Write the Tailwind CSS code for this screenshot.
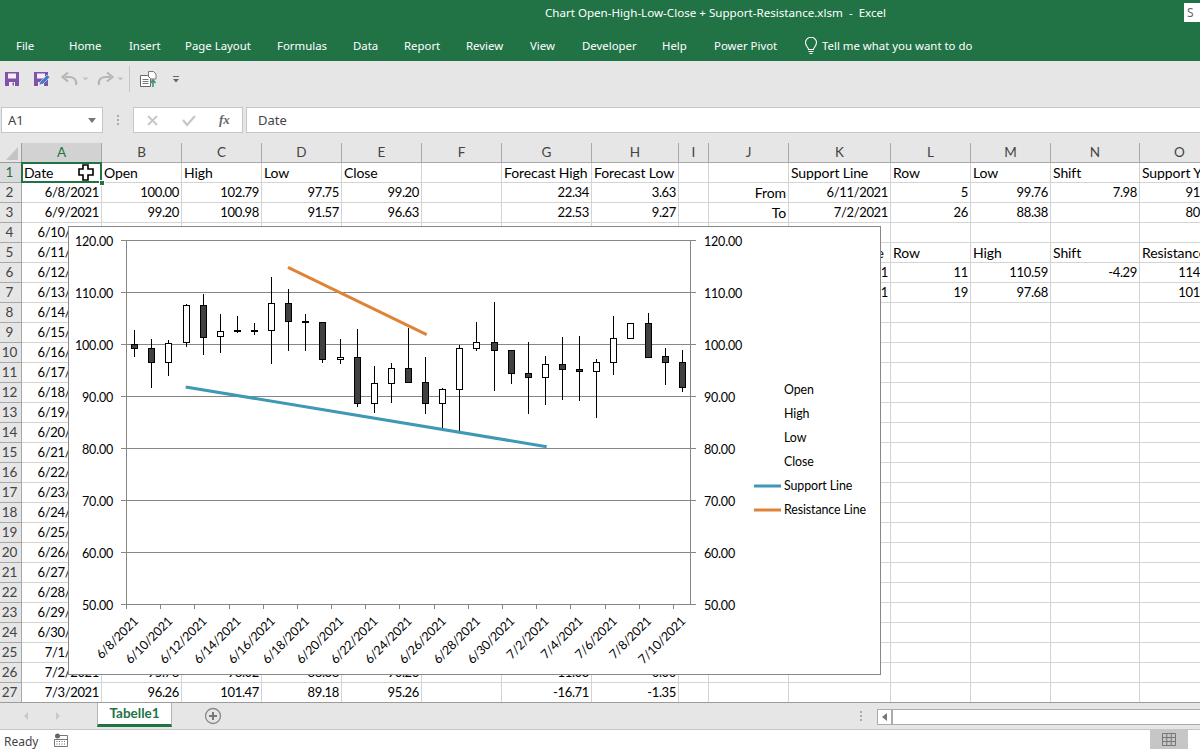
<!DOCTYPE html>
<html lang="en">
<head>
<meta charset="UTF-8">
<title>Chart Open-High-Low-Close + Support-Resistance.xlsm - Excel</title>
<script src="https://cdn.jsdelivr.net/npm/@tailwindcss/browser@4"></script>
</head>
<body class="w-[1200px] h-[750px] overflow-hidden bg-white flex flex-col font-['Noto_Sans',sans-serif]">

<!-- title bar + ribbon tabs -->
<header class="h-[61px] shrink-0 bg-[#217346] text-white relative">
  <div class="h-[27px] flex items-center justify-center text-[11.6px] whitespace-pre pl-[231px] pb-[1px]">Chart Open-High-Low-Close + Support-Resistance.xlsm  -  Excel</div>
  <div class="absolute right-0 top-[3px] w-[16px] h-[19px] bg-white text-[#666] text-[12px] pl-[3px] leading-[19px]">S</div>
  <nav class="flex items-center h-[34px] text-[11.4px] pl-[16px] pt-[4px]">
    <span class="w-[53px]">File</span>
    <span class="w-[60px]">Home</span>
    <span class="w-[56px]">Insert</span>
    <span class="w-[92px]">Page Layout</span>
    <span class="w-[76px]">Formulas</span>
    <span class="w-[51px]">Data</span>
    <span class="w-[62px]">Report</span>
    <span class="w-[64px]">Review</span>
    <span class="w-[52px]">View</span>
    <span class="w-[80px]">Developer</span>
    <span class="w-[52px]">Help</span>
    <span class="w-[90px]">Power Pivot</span>
    <svg width="14" height="18" viewBox="0 0 14 18" fill="none" stroke="white" stroke-width="1.1" class="mr-[4px]">
      <path d="M4.5 12.5c0-2-3-3.5-3-7a5.5 5.2 0 0 1 11 0c0 3.5-3 5-3 7z"/>
      <path d="M4.5 14.5h5M5.5 16.5h3"/>
    </svg>
    <span>Tell me what you want to do</span>
  </nav>
</header>

<!-- quick access toolbar -->
<div class="h-[46px] shrink-0 bg-[#e6e6e6]">
  <svg width="190" height="32" viewBox="0 61 190 32" class="block">
    <path d="M5 72h14v14H5z" fill="#8153a8"/>
    <path d="M8 73.5h8v5H8zM9 82h6v4H9z" fill="#f3eef7"/>
    <path d="M12.5 82.5h1.5v3h-1.5z" fill="#8153a8"/>
    <path d="M34 72h14v14H34z" fill="#8153a8"/>
    <path d="M37 73.5h8v5h-8zM38 82h6v4h-6z" fill="#f3eef7"/>
    <path d="M39 85l1-3 7-7 3 2-7 7z" fill="#3c7fc4" stroke="#e6e6e6" stroke-width=".6"/>
    <path d="M76 85c1-5-2-8-6-8h-5" fill="none" stroke="#b6b6b6" stroke-width="2.2"/>
    <path d="M68 72.5l-5.5 4.5 5.5 4.5" fill="none" stroke="#b6b6b6" stroke-width="2.2"/>
    <path d="M82.5 77.5h6l-3 3z" fill="#c2c2c2"/>
    <path d="M99 85c-1-5 2-8 6-8h5" fill="none" stroke="#b6b6b6" stroke-width="2.2"/>
    <path d="M107 72.5l5.5 4.5-5.5 4.5" fill="none" stroke="#b6b6b6" stroke-width="2.2"/>
    <path d="M117.5 77.5h6l-3 3z" fill="#c2c2c2"/>
    <path d="M129.5 66v26" stroke="#c6c6c6"/>
    <path d="M148.5 71.5h5l2.5 2.5v5h-7.5z" fill="#fff" stroke="#777"/>
    <path d="M140.5 75.5h7l3 3v8h-10z" fill="#fff" stroke="#666"/>
    <path d="M142.5 79.5h6M142.5 81.5h6M142.5 83.5h6" stroke="#777"/>
    <path d="M153 87v-6M150.5 83l2.5-3 2.5 3" fill="none" stroke="#3f9277" stroke-width="1.6"/>
    <path d="M173 76.5h6" stroke="#666"/>
    <path d="M173 79h6l-3 3.5z" fill="#666"/>
  </svg>
</div>

<!-- formula bar -->
<div class="h-[26px] shrink-0 bg-[#e6e6e6] relative">
  <div class="flex h-[26px]">
    <div class="ml-[1px] w-[102px] bg-white border border-[#c6c6c6] flex items-center justify-between pl-[6px] pr-[6px] pt-[1px] text-[13px] text-[#444]">
      <span>A1</span>
      <span class="w-0 h-0 border-x-[4px] border-x-transparent border-t-[5px] border-t-[#777]"></span>
    </div>
    <div class="w-[30px] flex flex-col items-center justify-center gap-[2px]">
      <i class="w-[2px] h-[2px] bg-[#aaa]"></i><i class="w-[2px] h-[2px] bg-[#aaa]"></i><i class="w-[2px] h-[2px] bg-[#aaa]"></i>
    </div>
    <div class="w-[110px] bg-white border border-[#c6c6c6] relative flex items-center">
      <svg width="70" height="24" viewBox="0 0 70 24" class="shrink-0">
        <path d="M14 8l9 9M23 8l-9 9" stroke="#c8c8c8" stroke-width="2" fill="none"/>
        <path d="M49 12l4 5 8-9" stroke="#c8c8c8" stroke-width="2.2" fill="none"/>
      </svg>
      <span class="ml-[15px] font-['Liberation_Serif',serif] italic font-bold text-[13px] text-[#666]">fx</span>
    </div>
    <div class="ml-[3px] flex-1 bg-white border-y border-l border-[#c6c6c6] flex items-center pl-[11px] pt-[1px] text-[13px] text-[#444]">Date</div>
  </div>
</div>
<div class="h-[10px] shrink-0 bg-[#e6e6e6]"></div>

<!-- sheet -->
<main class="h-[560px] shrink-0 relative overflow-hidden">
  <div id="grid" class="grid w-[1220px] grid-cols-[22px_80px_80px_80px_80px_80px_80px_90px_87px_30px_80px_102px_80px_80px_89px_80px] auto-rows-[20px] font-['Lato',sans-serif] text-[14px] text-black"></div>

  <!-- active cell A1 and pointer -->
  <div class="absolute left-[21px] top-[19px] w-[81px] h-[21px] border-2 border-[#217346]"></div>
  <div class="absolute left-[99px] top-[37px] w-[6px] h-[6px] bg-[#217346] border border-white"></div>
  <svg class="absolute left-[78px] top-[21px]" width="16" height="17" viewBox="0 0 16 17">
    <path d="M5 1h5v4h5v6h-5v5H5v-5H1V5h4z" fill="white" stroke="black" stroke-width="1.6"/>
  </svg>

  <!-- chart object floats over the cells -->
  <div class="absolute left-[68px] top-[83px] w-[813px] h-[449px] bg-white border border-[#888]">
    <svg id="chart" class="absolute -left-px -top-px font-['Lato',sans-serif]" width="813" height="449" viewBox="68 226 813 449"></svg>
  </div>
</main>

<!-- sheet tabs + horizontal scrollbar -->
<div class="h-[27px] shrink-0 bg-[#e6e6e6] border-t border-[#9c9c9c] -mt-px relative flex items-start">
  <svg width="90" height="26" viewBox="0 0 90 26" class="shrink-0 ml-[7px]">
    <path d="M21 9l-4 4 4 4zM49 9l4 4-4 4z" fill="#c8c8c8"/>
  </svg>
  <div class="w-[75px] h-[24px] bg-white border-x border-[#b4b4b4] border-b-[3px] border-b-[#217346] flex items-center justify-center font-['Lato',sans-serif] font-bold text-[13.5px] text-[#217346]">Tabelle1</div>
  <svg width="20" height="20" viewBox="0 0 20 20" class="ml-[31px] mt-[3px]">
    <circle cx="10" cy="10" r="7.5" fill="none" stroke="#8a8a8a" stroke-width="1.3"/>
    <path d="M6 10h8M10 6v8" stroke="#777" stroke-width="2"/>
  </svg>
  <div class="absolute left-[860px] top-[8px] flex flex-col gap-[2px]">
    <i class="w-[2px] h-[2px] bg-[#aaa]"></i><i class="w-[2px] h-[2px] bg-[#aaa]"></i><i class="w-[2px] h-[2px] bg-[#aaa]"></i>
  </div>
  <div class="absolute left-[877px] top-[6px] right-0 h-[16px] bg-white border-y border-l border-[#ababab] flex">
    <div class="w-[15px] border-r-2 border-[#ababab] flex items-center justify-center">
      <span class="w-0 h-0 border-y-[4px] border-y-transparent border-r-[5px] border-r-[#777]"></span>
    </div>
  </div>
</div>

<!-- status bar -->
<footer class="flex-1 bg-white border-t border-[#c6c6c6] flex items-center relative text-[12px] text-[#444]">
  <span class="ml-[4px] pt-[3px]">Ready</span>
  <svg width="14" height="14" viewBox="0 0 14 14" class="absolute left-[54px] top-[3px]">
    <circle cx="3.5" cy="3" r="2.5" fill="#666"/>
    <path d="M5.5 2.5h8v11h-13V6.5h12.5" fill="none" stroke="#777"/>
    <path d="M2.5 8.5h1M5 8.5h1M7.5 8.5h1M10 8.5h1M2.5 11h1M5 11h1M7.5 11h1M10 11h1" stroke="#666"/>
  </svg>
  <div class="absolute left-[1150px] -top-px w-[38px] h-[20px] bg-[#c6c6c6] flex items-center justify-center">
    <svg width="14" height="14" viewBox="0 0 14 14" fill="none" stroke="#777"><path d="M.5 1.5h13v12H.5zM4.8 1.5v12M9.2 1.5v12M.5 5.5h13M.5 9.5h13"/></svg>
  </div>
</footer>

<script>
// spreadsheet cells, keyed by row then column letter
const cols = ['A','B','C','D','E','F','G','H','I','J','K','L','M','N','O'];
const cells = {
  1: {A:'Date',B:'Open',C:'High',D:'Low',E:'Close',G:'Forecast High',H:'Forecast Low',K:'Support Line',L:'Row',M:'Low',N:'Shift',O:'Support Y'},
  2: {B:100.00,C:102.79,D:97.75,E:99.20,G:22.34,H:3.63,J:'From',K:'6/11/2021',L:'5',M:99.76,N:7.98,O:91.78},
  3: {B:99.20,C:100.98,D:91.57,E:96.63,G:22.53,H:9.27,J:'To',K:'7/2/2021',L:'26',M:88.38,O:80.40},
  5: {K:'Resistance Line',L:'Row',M:'High',N:'Shift',O:'Resistance Y'},
  6: {K:'6/17/2021',L:'11',M:110.59,N:-4.29,O:114.88},
  7: {K:'6/25/2021',L:'19',M:97.68,O:101.97},
  26: {B:95.78,C:98.02,D:88.38,E:90.26,G:11.03,H:0.00},
  27: {B:96.26,C:101.47,D:89.18,E:95.26,G:-16.71,H:-1.35}
};

let html = '<div class="bg-[#e6e6e6] border-r border-b border-[#9c9c9c] relative"><svg class="absolute left-[5px] top-[3px]" width="14" height="15"><path d="M13 1v13H1z" fill="#c4c4c4"/></svg></div>';
cols.forEach(c => {
  const sel = c === 'A';
  html += '<div class="border-r border-b border-[#a8a8a8] flex items-center justify-center text-[13.5px] ' + (sel ? 'bg-[#d2d2d2] text-[#217346]' : 'bg-[#e6e6e6] text-[#444]') + '">' + c + '</div>';
});
const start = new Date(2021, 5, 8);
for (let r = 1; r <= 27; r++) {
  html += '<div class="border-r border-b border-[#a8a8a8] flex items-center justify-center pr-[2px] text-[13.5px] ' + (r === 1 ? 'bg-[#dcdcdc] text-[#217346]' : 'bg-[#e6e6e6] text-[#444]') + '">' + r + '</div>';
  cols.forEach(c => {
    let v = (cells[r] || {})[c];
    if (c === 'A' && r > 1) {
      const d = new Date(start.getTime() + (r - 2) * 86400000);
      v = (d.getMonth() + 1) + '/' + d.getDate() + '/2021';
    }
    if (typeof v === 'number') v = v.toFixed(2);
    if (v === undefined) v = '';
    const isWord = /[a-zA-Z]/.test(v);
    let look = 'justify-end pt-[1px] text-[13px] tracking-[-0.35px]';
    if (isWord) look = (v === 'From' || v === 'To') ? 'justify-end tracking-[-0.1px]' : 'justify-start tracking-[-0.1px]';
    html += '<div class="border-r border-b border-[#d4d4d4] flex items-center whitespace-nowrap overflow-hidden px-[2px] ' + look + '">' + v + '</div>';
  });
}
document.getElementById('grid').innerHTML = html;

// candles in screen pixels: wick top, wick bottom, body top, body bottom, dark body
const candles = [
  [330,357,344,348,1],[339,388,348,362,1],[340,376,343,362,0],[304,347,305,342,0],[294,355,305,337,1],
  [314,353,331,336,0],[316,333,330,331,1],[323,335,330,331,1],[277,364,303,330,0],[289,351,303,321,1],
  [314,351,321,322,1],[322,363,322,359,1],[339,364,357,359,0],[329,407,357,403,1],[366,413,383,403,0],
  [363,403,368,383,0],[328,382,368,382,1],[357,414,382,403,1],[388,428,389,403,0],[345,432,348,389,0],
  [322,351,342,348,0],[302,391,342,350,1],[350,384,350,373,1],[342,414,373,377,1],[356,405,364,377,0],
  [337,400,364,369,1],[336,401,369,371,1],[359,418,362,371,0],[316,375,338,362,0],[323,339,323,338,0],
  [313,357,323,357,1],[348,385,356,362,1],[350,392,362,387,1]
];
const ink = '#868686';
let g = '<g shape-rendering="crispEdges" stroke="' + ink + '" fill="none">';
for (let i = 0; i < 8; i++) {
  const y = 240.5 + 52 * i;
  g += '<path d="M121 ' + y + 'H696"/>';
}
g += '<path d="M126.5 240V605M690.5 240V605"/>';
for (let i = 0; i < 17; i++) {
  const x = Math.round(126 + 34.18 * i) + 0.5;
  g += '<path d="M' + x + ' 605V609"/>';
}
g += '</g>';

// y axis labels on both sides
for (let i = 0; i < 8; i++) {
  const y = 245.5 + 52 * i, t = (120 - 10 * i).toFixed(2);
  g += '<text x="113" y="' + y + '" text-anchor="end" font-size="12.5" letter-spacing="-.2">' + t + '</text>';
  g += '<text x="704" y="' + y + '" font-size="12.5" letter-spacing="-.2">' + t + '</text>';
}

// candlesticks
g += '<g shape-rendering="crispEdges" stroke="#000">';
candles.forEach((c, i) => {
  const x = Math.floor(134.7 + 17.11 * i) + 0.5;
  g += '<path d="M' + x + ' ' + c[0] + 'V' + c[1] + '"/>';
  g += '<rect x="' + (x - 3) + '" y="' + (c[2] + 0.5) + '" width="6" height="' + Math.max(c[3] - c[2], 1) + '" fill="' + (c[4] ? '#404040' : '#fff') + '"/>';
});
g += '</g>';

// trend lines
g += '<path d="M288 267.3L426.7 334.7" stroke="#df8436" stroke-width="3" fill="none"/>';
g += '<path d="M185.7 387L546.7 446.7" stroke="#3f98b5" stroke-width="3" fill="none"/>';

// rotated dates under the x axis
const dates = ['6/8/2021','6/10/2021','6/12/2021','6/14/2021','6/16/2021','6/18/2021','6/20/2021','6/22/2021','6/24/2021','6/26/2021','6/28/2021','6/30/2021','7/2/2021','7/4/2021','7/6/2021','7/8/2021','7/10/2021'];
dates.forEach((d, i) => {
  const x = 139 + 34.2 * i, y = 622;
  g += '<text x="' + x + '" y="' + y + '" text-anchor="end" font-size="12.5" letter-spacing="-.2" transform="rotate(-45 ' + x + ' ' + y + ')">' + d + '</text>';
});

// legend
['Open','High','Low','Close','Support Line','Resistance Line'].forEach((t, i) => {
  g += '<text x="784" y="' + (394.3 + 24 * i) + '" font-size="12.4" letter-spacing="-.1">' + t + '</text>';
});
g += '<path d="M754 486H781" stroke="#3f98b5" stroke-width="3"/><path d="M754 510H781" stroke="#df8436" stroke-width="3"/>';
document.getElementById('chart').innerHTML = g;
</script>
</body>
</html>
